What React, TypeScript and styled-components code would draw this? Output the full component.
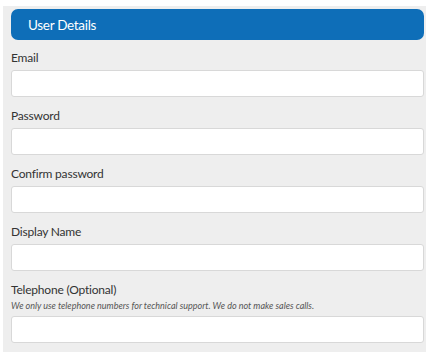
import React from 'react';
import styled, { createGlobalStyle } from 'styled-components';

const GlobalStyle = createGlobalStyle`
  body {
    margin: 0;
    background: #ffffff;
    font-family: Lato, 'Liberation Sans', sans-serif;
  }
`;

const Panel = styled.div`
  margin: 6px 4px 0 3px;
  padding: 3px 2px 8px 8px;
  background-color: #eeeeee;
  display: flex;
  flex-direction: column;
`;

const Header = styled.div`
  height: 31px;
  display: flex;
  align-items: center;
  padding-left: 17px;
  background-color: #0e6eb8;
  border-radius: 7px;
  color: #ffffff;
  font-size: 13.5px;
  letter-spacing: -0.3px;
  margin-bottom: 9px;
`;

const Field = styled.div`
  display: flex;
  flex-direction: column;
  margin-bottom: 10px;
`;

const Label = styled.label`
  height: 18px;
  line-height: 18px;
  font-size: 12px;
  letter-spacing: -0.2px;
  color: #333333;
`;

const Hint = styled.div`
  height: 13px;
  line-height: 13px;
  font-size: 9px;
  font-style: italic;
  color: #555555;
  margin-bottom: 1px;
`;

const Input = styled.input`
  box-sizing: border-box;
  height: 27px;
  margin-top: 3px;
  border: 1px solid #d8d8d8;
  border-radius: 3px;
  background: #ffffff;
  padding: 0 8px;
  font: inherit;
  outline: none;
`;

const fields = [
  { label: 'Email', type: 'email' },
  { label: 'Password', type: 'password' },
  { label: 'Confirm password', type: 'password' },
  { label: 'Display Name', type: 'text' },
];

export default function App() {
  return (
    <>
      <GlobalStyle />
      <Panel>
        <Header>User Details</Header>
        {fields.map(f => (
          <Field key={f.label}>
            <Label>{f.label}</Label>
            <Input type={f.type} />
          </Field>
        ))}
        <Field>
          <Label>Telephone (Optional)</Label>
          <Hint>We only use telephone numbers for technical support. We do not make sales calls.</Hint>
          <Input type="tel" />
        </Field>
      </Panel>
    </>
  );
}
